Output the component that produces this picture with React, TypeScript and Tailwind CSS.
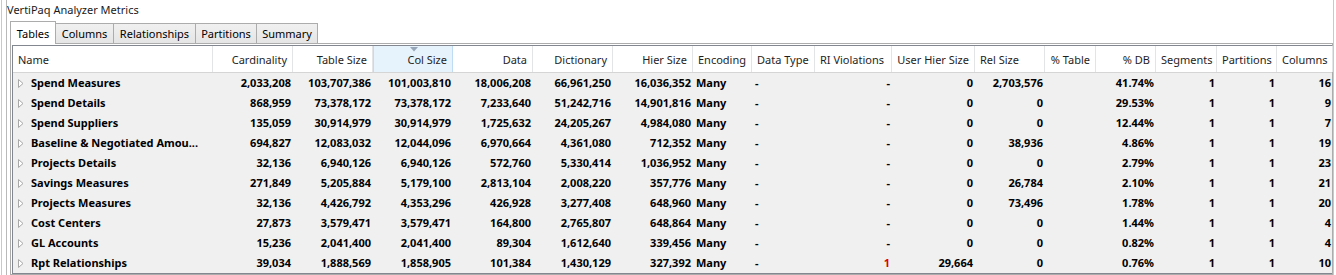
import React from "react";

type Col = { title: string; w: string; head: "l" | "r"; cell: "l" | "r" };

const cols: Col[] = [
  { title: "Name", w: "w-[200px]", head: "l", cell: "l" },
  { title: "Cardinality", w: "w-[80px]", head: "r", cell: "r" },
  { title: "Table Size", w: "w-[80px]", head: "r", cell: "r" },
  { title: "Col Size", w: "w-[80px]", head: "r", cell: "r" },
  { title: "Data", w: "w-[80px]", head: "r", cell: "r" },
  { title: "Dictionary", w: "w-[80px]", head: "r", cell: "r" },
  { title: "Hier Size", w: "w-[80px]", head: "r", cell: "r" },
  { title: "Encoding", w: "w-[59px]", head: "l", cell: "l" },
  { title: "Data Type", w: "w-[63px]", head: "l", cell: "l" },
  { title: "RI Violations", w: "w-[77px]", head: "l", cell: "r" },
  { title: "User Hier Size", w: "w-[83px]", head: "r", cell: "r" },
  { title: "Rel Size", w: "w-[70px]", head: "l", cell: "r" },
  { title: "% Table", w: "w-[51px]", head: "r", cell: "r" },
  { title: "% DB", w: "w-[60px]", head: "r", cell: "r" },
  { title: "Segments", w: "w-[61px]", head: "l", cell: "r" },
  { title: "Partitions", w: "w-[60px]", head: "l", cell: "r" },
  { title: "Columns", w: "w-[56px]", head: "l", cell: "r" },
];

const rows: string[][] = [
  ["Spend Measures", "2,033,208", "103,707,386", "101,003,810", "18,006,208", "66,961,250", "16,036,352", "Many", "-", "-", "0", "2,703,576", "", "41.74%", "1", "1", "16"],
  ["Spend Details", "868,959", "73,378,172", "73,378,172", "7,233,640", "51,242,716", "14,901,816", "Many", "-", "-", "0", "0", "", "29.53%", "1", "1", "9"],
  ["Spend Suppliers", "135,059", "30,914,979", "30,914,979", "1,725,632", "24,205,267", "4,984,080", "Many", "-", "-", "0", "0", "", "12.44%", "1", "1", "7"],
  ["Baseline & Negotiated Amou...", "694,827", "12,083,032", "12,044,096", "6,970,664", "4,361,080", "712,352", "Many", "-", "-", "0", "38,936", "", "4.86%", "1", "1", "19"],
  ["Projects Details", "32,136", "6,940,126", "6,940,126", "572,760", "5,330,414", "1,036,952", "Many", "-", "-", "0", "0", "", "2.79%", "1", "1", "23"],
  ["Savings Measures", "271,849", "5,205,884", "5,179,100", "2,813,104", "2,008,220", "357,776", "Many", "-", "-", "0", "26,784", "", "2.10%", "1", "1", "21"],
  ["Projects Measures", "32,136", "4,426,792", "4,353,296", "426,928", "3,277,408", "648,960", "Many", "-", "-", "0", "73,496", "", "1.78%", "1", "1", "20"],
  ["Cost Centers", "27,873", "3,579,471", "3,579,471", "164,800", "2,765,807", "648,864", "Many", "-", "-", "0", "0", "", "1.44%", "1", "1", "4"],
  ["GL Accounts", "15,236", "2,041,400", "2,041,400", "89,304", "1,612,640", "339,456", "Many", "-", "-", "0", "0", "", "0.82%", "1", "1", "4"],
  ["Rpt Relationships", "39,034", "1,888,569", "1,858,905", "101,384", "1,430,129", "327,392", "Many", "-", "1", "29,664", "0", "", "0.76%", "1", "1", "10"],
];

const tabs = [
  { label: "Tables", w: "w-[46px]" },
  { label: "Columns", w: "w-[58px]" },
  { label: "Relationships", w: "w-[82px]" },
  { label: "Partitions", w: "w-[61px]" },
  { label: "Summary", w: "w-[61px]" },
];

function Expander() {
  return (
    <svg width="6" height="9" viewBox="0 0 6 9" className="shrink-0">
      <path d="M0.5 0.5 L5 4.5 L0.5 8.5 Z" fill="#ffffff" stroke="#a8a8a8" strokeWidth="1" />
    </svg>
  );
}

export default function App() {
  return (
    <div className="w-[1336px] h-[275px] bg-white overflow-hidden text-[11px] text-black font-['Noto_Sans',sans-serif] pl-[1px]">
      <div className="h-full border-l border-[#c9c9c9] pl-[4px] w-[1333px] border-r">
        <div className="h-full border-l border-[#b9b9b9] flex flex-col">
          {/* title */}
          <div className="h-[21px] pt-[1px] leading-[18px] text-[#1a1a1a]">VertiPaq Analyzer Metrics</div>

          {/* tabs */}
          <div className="h-[22px] flex items-end pl-[3px] relative z-10">
            {tabs.map((t, i) =>
              i === 0 ? (
                <div
                  key={t.label}
                  className={`${t.w} h-[23px] -mb-[1px] bg-white border border-b-0 border-[#acacac] flex items-center justify-center leading-none`}
                >
                  {t.label}
                </div>
              ) : (
                <div
                  key={t.label}
                  className={`${t.w} h-[20px] bg-linear-to-b from-[#f0f0f0] to-[#e5e5e5] border border-l-0 border-b-0 border-[#acacac] flex items-center justify-center leading-none`}
                >
                  {t.label}
                </div>
              )
            )}
          </div>

          {/* tab panel */}
          <div className="flex-1 ml-[3px] border border-[#acacac] pt-[1px] pl-[1px]">
            <div className="border-t border-l border-b border-[#828790] bg-[#f0f0f0] h-full">
              {/* header */}
              <div className="flex h-[27px] bg-white border-b border-[#d5d5d5]">
                {cols.map((c, i) => (
                  <div
                    key={c.title}
                    className={`${c.w} relative shrink-0 flex items-center pt-[3px] whitespace-nowrap overflow-hidden ${
                      c.head === "r" ? "justify-end pr-[5px]" : "justify-start pl-[5px]"
                    } ${
                      i === 3
                        ? "bg-[#e6f3fc] border-x border-[#bfdcf2]"
                        : "border-r border-[#e3e4e6]"
                    } text-[#1e1e1e]`}
                  >
                    {i === 3 && (
                      <svg width="8" height="5" viewBox="0 0 8 5" className="absolute top-[1px] left-[36px]">
                        <path d="M0 0 L8 0 L4 4.5 Z" fill="#97a7b9" />
                      </svg>
                    )}
                    {c.title}
                  </div>
                ))}
              </div>

              {/* rows */}
              {rows.map((r) => (
                <div key={r[0]} className="flex h-[20px] font-bold">
                  {r.map((v, i) => {
                    const c = cols[i];
                    if (i === 0) {
                      return (
                        <div key={i} className={`${c.w} shrink-0 flex items-center pl-[5px] gap-[7px] whitespace-nowrap overflow-hidden`}>
                          <Expander />
                          <span>{v}</span>
                        </div>
                      );
                    }
                    const red = i === 9 && v === "1";
                    return (
                      <div
                        key={i}
                        className={`${c.w} shrink-0 flex items-center whitespace-nowrap overflow-hidden ${
                          c.cell === "r" ? "justify-end pr-[2px]" : "justify-start pl-[3px]"
                        } ${red ? "text-[#e10000]" : ""}`}
                      >
                        {v}
                      </div>
                    );
                  })}
                </div>
              ))}
            </div>
          </div>
        </div>
      </div>
    </div>
  );
}
